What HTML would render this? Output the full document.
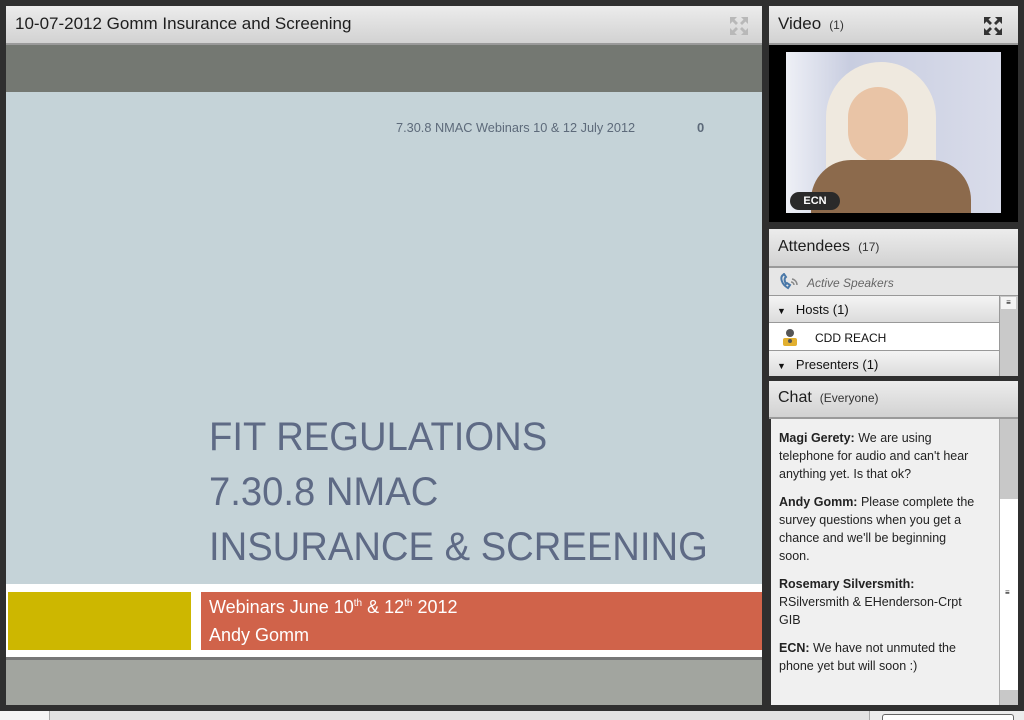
<!DOCTYPE html>
<html><head><meta charset="utf-8">
<style>
*{margin:0;padding:0;box-sizing:border-box}
body{width:1024px;height:720px;background:#2f2f2f;position:relative;overflow:hidden;font-family:"Liberation Sans",sans-serif}
.abs{position:absolute}
.hdr{background:linear-gradient(#ececec,#d2d2d2);border-bottom:2px solid #9a9a9a;color:#1e1e1e}
.hdr .t{position:absolute;left:9px;font-size:16px}
.hdr .c{font-size:12px;color:#333;margin-left:8px}
.row{position:absolute;left:769px;width:230px;font-size:13px;color:#111}
</style></head><body>
<div class="abs hdr" style="left:6px;top:6px;width:756px;height:39px">
 <div class="t" style="top:8px;font-size:17px">10-07-2012 Gomm Insurance and Screening</div>
 <svg class="abs" style="left:723px;top:10px" width="20" height="20" viewBox="0 0 20 20" fill="#b8b8b8"><path d="M1 1h7L5.5 3.5 9 7 7 9 3.5 5.5 1 8zM19 1v7l-2.5-2.5L13 9l-2-2 3.5-3.5L12 1zM1 19v-7l2.5 2.5L7 11l2 2-3.5 3.5L8 19zM19 19h-7l2.5-2.5L11 13l2-2 3.5 3.5L19 12z"/></svg>
</div>
<div class="abs" style="left:6px;top:45px;width:756px;height:47px;background:#747872"></div>
<div class="abs" style="left:6px;top:92px;width:756px;height:492px;background:#c5d3d8"></div>
<div class="abs" style="left:396px;top:120px;font-size:13px;color:#5d6a7a;transform:scaleX(0.98);transform-origin:0 0">7.30.8 NMAC Webinars 10 &amp; 12 July 2012</div>
<div class="abs" style="left:697px;top:120px;font-size:13px;color:#5d6a7a;font-weight:bold">0</div>
<div class="abs" style="left:209px;top:410px;font-size:40px;line-height:55px;color:#5e6a85;transform:scaleX(0.955);transform-origin:0 0;white-space:nowrap">FIT REGULATIONS<br>7.30.8 NMAC<br>INSURANCE &amp; SCREENING</div>
<div class="abs" style="left:6px;top:584px;width:756px;height:73px;background:#fff"></div>
<div class="abs" style="left:8px;top:592px;width:183px;height:58px;background:#cdb700"></div>
<div class="abs" style="left:201px;top:592px;width:561px;height:58px;background:#d0634a"></div>
<div class="abs" style="left:209px;top:590px;font-size:18px;color:#fff;line-height:28px;white-space:nowrap">Webinars June 10<sup style="font-size:10px">th</sup> &amp; 12<sup style="font-size:10px">th</sup> 2012<br>Andy Gomm</div>
<div class="abs" style="left:6px;top:657px;width:756px;height:48px;background:#a2a59f;border-top:3px solid #777"></div>

<div class="abs hdr" style="left:769px;top:6px;width:249px;height:39px">
 <div class="t" style="top:8px;font-size:17px">Video<span class="c">(1)</span></div>
 <svg class="abs" style="left:214px;top:10px" width="20" height="20" viewBox="0 0 20 20" fill="#333"><path d="M1 1h7L5.5 3.5 9 7 7 9 3.5 5.5 1 8zM19 1v7l-2.5-2.5L13 9l-2-2 3.5-3.5L12 1zM1 19v-7l2.5 2.5L7 11l2 2-3.5 3.5L8 19zM19 19h-7l2.5-2.5L11 13l2-2 3.5 3.5L19 12z"/></svg>
</div>
<div class="abs" style="left:769px;top:45px;width:249px;height:177px;background:#000"></div>
<div class="abs" style="left:786px;top:52px;width:215px;height:161px;background:linear-gradient(90deg,#eef0f6 0%,#c8cde0 30%,#d9dcea 100%);overflow:hidden">
 <div class="abs" style="left:40px;top:10px;width:110px;height:130px;border-radius:55px 55px 20px 20px;background:#efe9df"></div>
 <div class="abs" style="left:62px;top:35px;width:60px;height:75px;border-radius:30px;background:#e9c4a6"></div>
 <div class="abs" style="left:25px;top:108px;width:160px;height:70px;border-radius:40px 40px 0 0;background:#8c6a4c"></div>
 <div class="abs" style="left:4px;top:140px;width:50px;height:18px;border-radius:9px;background:#2a2a2a;color:#fff;font-size:11px;font-weight:bold;text-align:center;line-height:18px">ECN</div>
</div>

<div class="abs hdr" style="left:769px;top:229px;width:249px;height:39px">
 <div class="t" style="top:9px;font-size:16px">Attendees<span class="c">(17)</span></div>
</div>
<div class="abs" style="left:769px;top:268px;width:249px;height:28px;background:#e6e6e6;border-bottom:1px solid #999"></div>
<svg class="abs" style="left:779px;top:273px" width="20" height="18" viewBox="0 0 20 18" fill="none" stroke="#4a78a8" stroke-width="2"><path d="M4 2c-3 2-2 9 5 13l2-3-3-2-1 1C6 9 5 7 6 5l1-1-2-3z"/><path d="M12 9a3 3 0 0 1 3 3M13 6a6 6 0 0 1 5 6" stroke="#888" stroke-width="1.5"/></svg>
<div class="abs" style="left:807px;top:276px;font-size:12px;font-style:italic;color:#666">Active Speakers</div>
<div class="abs" style="left:769px;top:296px;width:230px;height:27px;background:linear-gradient(#f4f4f4,#dcdcdc);border-bottom:1px solid #999"></div>
<div class="row" style="top:302px"><span style="font-size:9px;margin:0 10px 0 8px">▼</span>Hosts (1)</div>
<div class="abs" style="left:769px;top:323px;width:230px;height:28px;background:#fff;border-bottom:1px solid #999"></div>
<svg class="abs" style="left:780px;top:327px" width="20" height="20" viewBox="0 0 20 20"><circle cx="10" cy="6" r="4" fill="#555"/><rect x="3" y="11" width="14" height="8" rx="2" fill="#e2b030"/><circle cx="10" cy="14" r="2" fill="#555"/></svg>
<div class="row" style="top:331px;left:815px;font-size:12px">CDD REACH</div>
<div class="abs" style="left:769px;top:351px;width:230px;height:25px;background:linear-gradient(#f4f4f4,#dcdcdc)"></div>
<div class="row" style="top:357px"><span style="font-size:9px;margin:0 10px 0 8px">▼</span>Presenters (1)</div>
<div class="abs" style="left:999px;top:296px;width:19px;height:80px;background:#c9c9c9;border-left:1px solid #999"></div>
<div class="abs" style="left:1001px;top:297px;width:15px;height:12px;background:#f4f4f4;font-size:8px;text-align:center;line-height:12px">≡</div>

<div class="abs hdr" style="left:769px;top:381px;width:249px;height:38px">
 <div class="t" style="top:8px;font-size:16px">Chat<span class="c">(Everyone)</span></div>
</div>
<div class="abs" style="left:771px;top:419px;width:228px;height:286px;background:#f0f0f0"></div>
<div class="abs" style="left:999px;top:419px;width:19px;height:286px;background:#fff;border-left:1px solid #aaa"></div>
<div class="abs" style="left:1000px;top:419px;width:18px;height:80px;background:#c8c8c8"></div>
<div class="abs" style="left:1000px;top:690px;width:18px;height:15px;background:#c8c8c8"></div>
<div class="abs" style="left:1005px;top:588px;font-size:8px">≡</div>
<div class="abs" style="left:779px;top:429px;width:196px;font-size:12.5px;line-height:18px;color:#222">
 <p style="margin-bottom:10px"><b>Magi Gerety:</b> We are using telephone for audio and can't hear anything yet. Is that ok?</p>
 <p style="margin-bottom:10px"><b>Andy Gomm:</b> Please complete the survey questions when you get a chance and we'll be beginning soon.</p>
 <p style="margin-bottom:10px"><b>Rosemary Silversmith:</b><br>RSilversmith &amp; EHenderson-Crpt GIB</p>
 <p><b>ECN:</b> We have not unmuted the phone yet but will soon :)</p>
</div>

<div class="abs" style="left:0;top:711px;width:1024px;height:9px;background:#e2e2e2"></div>
<div class="abs" style="left:0;top:711px;width:50px;height:9px;background:#f4f4f4;border-right:1px solid #aaa"></div>
<div class="abs" style="left:869px;top:711px;width:155px;height:9px;background:#ececec;border-left:1px solid #aaa"></div>
<div class="abs" style="left:882px;top:714px;width:132px;height:6px;background:#fff;border:1px solid #666;border-bottom:none;border-radius:3px 3px 0 0"></div>
</body></html>
